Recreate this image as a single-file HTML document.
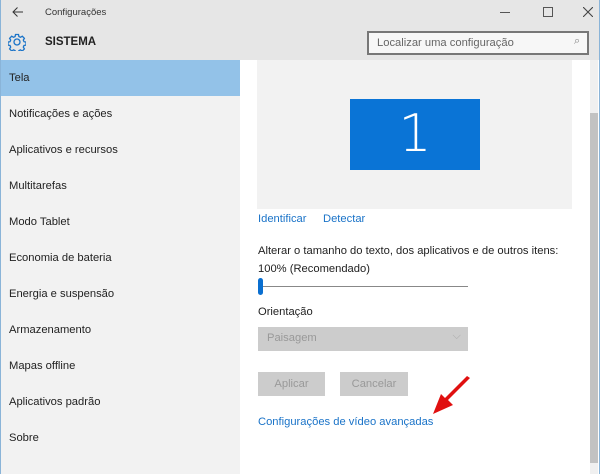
<!DOCTYPE html><html><head><style>
*{margin:0;padding:0;box-sizing:border-box}
body{width:600px;height:474px;overflow:hidden;font-family:"Liberation Sans",sans-serif;background:#fff;position:relative}
.a{position:absolute}
.nav div{height:36px;line-height:36px;padding-left:9px;font-size:11.2px;color:#222}
.lnk{color:#1a73c8;font-size:11.2px}
</style></head><body>
<div class="a" style="left:0;top:0;width:600px;height:60px;background:#e6e6e6"></div>
<svg class="a" style="left:12px;top:6px" width="12" height="12" viewBox="0 0 12 12"><path d="M11 6H1M5.5 1.5L1 6l4.5 4.5" fill="none" stroke="#333" stroke-width="1"/></svg>
<div class="a" style="left:45px;top:7px;font-size:9.5px;color:#333">Configurações</div>
<div class="a" style="left:500px;top:12px;width:10px;height:1px;background:#555"></div>
<div class="a" style="left:543px;top:7px;width:10px;height:10px;border:1px solid #555"></div>
<svg class="a" style="left:583px;top:7px" width="10" height="10" viewBox="0 0 10 10"><path d="M0 0L10 10M10 0L0 10" stroke="#444" stroke-width="1.1"/></svg>
<svg class="a" style="left:8px;top:33px" width="18" height="18" viewBox="0 0 18 18"><g fill="none" stroke="#1a73c8" stroke-width="1.3"><circle cx="9" cy="9" r="3"/><path d="M7.5 1.5h3l.4 2 1.6.8 1.8-1.1 2.1 2.1-1.1 1.8.7 1.6 2 .4v3l-2 .4-.7 1.6 1.1 1.8-2.1 2.1-1.8-1.1-1.6.7-.4 2h-3l-.4-2-1.6-.7-1.8 1.1-2.1-2.1 1.1-1.8-.7-1.6-2-.4v-3l2-.4.7-1.6-1.1-1.8 2.1-2.1 1.8 1.1 1.6-.8z"/></g></svg>
<div class="a" style="left:45px;top:36px;font-size:11.5px;font-weight:bold;color:#222">SISTEMA</div>
<div class="a" style="left:367px;top:31px;width:222px;height:24px;border:2px solid #777;background:#f7f7f7;font-size:11.2px;color:#666;padding:4px 0 0 8px">Localizar uma configuração</div>
<div class="a" style="left:574px;top:35px;font-size:11px;color:#888">⌕</div>
<div class="a nav" style="left:0;top:60px;width:240px;height:414px;background:#f2f2f2">
<div style="background:#93c2e8">Tela</div><div>Notificações e ações</div><div>Aplicativos e recursos</div><div>Multitarefas</div><div>Modo Tablet</div><div>Economia de bateria</div><div>Energia e suspensão</div><div>Armazenamento</div><div>Mapas offline</div><div>Aplicativos padrão</div><div>Sobre</div></div>
<div class="a" style="left:257px;top:60px;width:315px;height:149px;background:#f2f2f2"></div>
<div class="a" style="left:350px;top:99px;width:130px;height:71px;background:#0a74d6;color:#fff;font-size:52px;text-align:center;line-height:71px;font-family:'DejaVu Sans',sans-serif;font-weight:200">1</div>
<div class="a lnk" style="left:258px;top:213px">Identificar</div>
<div class="a lnk" style="left:323px;top:213px">Detectar</div>
<div class="a" style="left:258px;top:242px;font-size:11.2px;color:#222;line-height:18px">Alterar o tamanho do texto, dos aplicativos e de outros itens:<br>100% (Recomendado)</div>
<div class="a" style="left:260px;top:286px;width:208px;height:1px;background:#888"></div>
<div class="a" style="left:258px;top:278px;width:5px;height:17px;border-radius:3px;background:#0a6fd0"></div>
<div class="a" style="left:258px;top:306px;font-size:11.2px;color:#222">Orientação</div>
<div class="a" style="left:258px;top:327px;width:210px;height:24px;background:#ccc;color:#999;font-size:11.2px;padding:5px 0 0 9px">Paisagem<span style="position:absolute;right:7px;top:3px;color:#aaa">⌵</span></div>
<div class="a" style="left:258px;top:372px;width:67px;height:24px;background:#ccc;color:#999;font-size:11.2px;text-align:center;line-height:24px">Aplicar</div>
<div class="a" style="left:340px;top:372px;width:68px;height:24px;background:#ccc;color:#999;font-size:11.2px;text-align:center;line-height:24px">Cancelar</div>
<svg class="a" style="left:430px;top:376px" width="42" height="42" viewBox="0 0 42 42"><path d="M40 2 L18 24 L23 29 L3 38 L11 18 L15 22 L37 0 Z" fill="#e01010"/></svg>
<div class="a lnk" style="left:258px;top:416px">Configurações de vídeo avançadas</div>
<div class="a" style="left:590px;top:60px;width:8px;height:414px;background:#f0f0f0"></div>
<div class="a" style="left:590px;top:113px;width:8px;height:350px;background:#c2c2c2"></div>
<div class="a" style="left:599px;top:0;width:1px;height:474px;background:#8ab4d8"></div>
<div class="a" style="left:0;top:0;width:1px;height:474px;background:#8ab4d8"></div>
</body></html>
